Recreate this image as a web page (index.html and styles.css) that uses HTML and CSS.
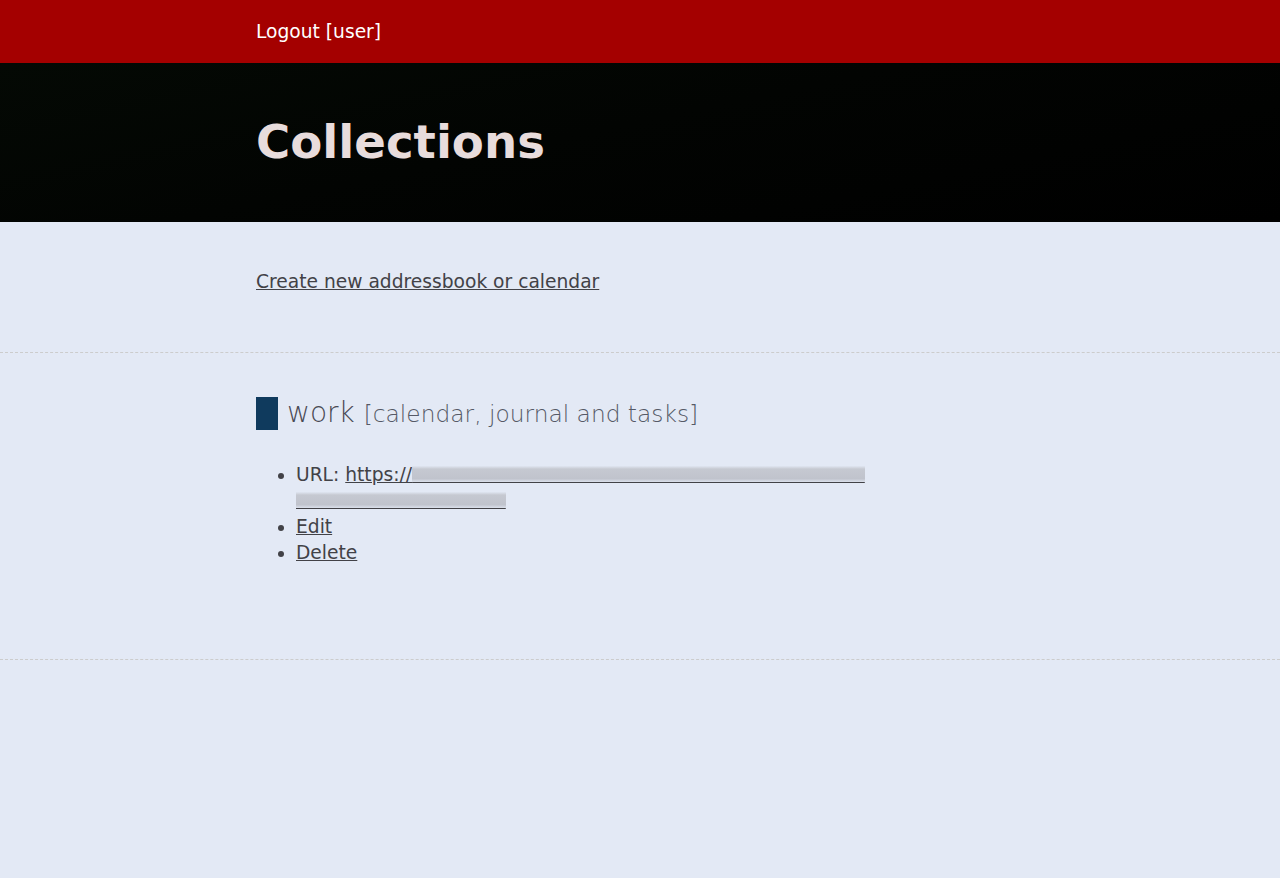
FILE: index.html
```html
<!DOCTYPE html>
<html lang="en">
<head>
<meta charset="utf-8">
<title>Radicale Web Interface</title>
<link rel="stylesheet" href="styles.css">
</head>
<body>
<nav class="topnav">
  <ul>
    <li><a href="#">Logout [user]</a></li>
  </ul>
</nav>
<header class="hero">
  <h1>Collections</h1>
</header>
<main>
  <section class="create">
    <a href="#">Create new addressbook or calendar</a>
  </section>
  <section class="collection">
    <h3 class="title"><span class="color"></span>work <small>[calendar, journal and tasks]</small></h3>
    <ul class="actions">
      <li>URL: <a href="#" class="url">https://<span class="smudge">xxxxxxxxxxxxxxxxxxxxxxxxxxxxxxxxxxxxxxxxx xxxxxxxxxxxxxxxxxxx</span></a></li>
      <li><a href="#">Edit</a></li>
      <li><a href="#">Delete</a></li>
    </ul>
  </section>
  <section class="empty"></section>
</main>
</body>
</html>
```

FILE: styles.css
```css
html, body {
  margin: 0;
}

body {
  background: #e3e9f5;
  color: #424247;
  font-family: "DejaVu Sans", sans-serif;
  font-size: 18.67px;
  line-height: 1.4;
  min-height: 100vh;
  display: flex;
  flex-direction: column;
}

a {
  color: inherit;
}

.topnav {
  background: #a40000;
  color: #ffffff;
  padding: 0 20%;
}

.topnav ul {
  display: flex;
  margin: 0;
  padding: 0;
  list-style: none;
}

.topnav a {
  display: block;
  color: inherit;
  text-decoration: none;
  padding: 18.5px 0.5em 18.5px 0;
}

.hero {
  background: linear-gradient(168deg, #040904 0%, #020402 45%, #000000 100%);
  color: #e8dcdc;
  padding: 46.6px 20%;
}

.hero h1 {
  margin: 0;
  font-size: 2.5em;
  font-weight: bold;
  line-height: 1.4;
}

main {
  flex: 1;
}

section {
  padding: 47px 20% 0;
}

section:not(:last-child) {
  border-bottom: 1px dashed #cccccc;
}

.create {
  height: 83px;
}

.collection {
  padding-top: 40.3px;
  height: 265.7px;
}

.title {
  margin: 0 0 29.8px;
  font-size: 1.5em;
  font-weight: 200;
  line-height: 1.4;
  color: #4a4a54;
}

.title small {
  font-size: 0.833em;
  color: #555966;
}

.color {
  display: inline-block;
  width: 22px;
  height: 33px;
  background: #0f3a5d;
  margin-right: 9px;
  vertical-align: -7.6px;
}

.actions {
  margin: 0;
  padding-left: 40px;
}

.url {
  text-decoration-color: #424247;
}

.smudge {
  color: transparent;
  background: linear-gradient(to bottom,
    rgba(196, 199, 207, 0) 8%,
    rgba(196, 199, 207, 0.95) 24%,
    rgba(190, 193, 202, 0.95) 70%,
    rgba(196, 199, 207, 0) 90%);
}
```
